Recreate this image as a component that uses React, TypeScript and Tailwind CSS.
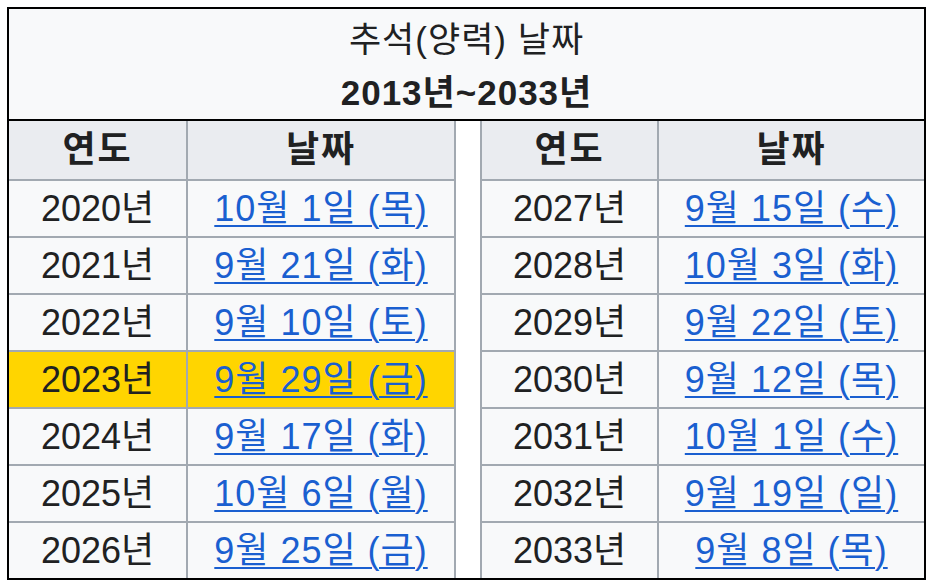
const left = [
  ["2020년", "10월 1일 (목)"],
  ["2021년", "9월 21일 (화)"],
  ["2022년", "9월 10일 (토)"],
  ["2023년", "9월 29일 (금)"],
  ["2024년", "9월 17일 (화)"],
  ["2025년", "10월 6일 (월)"],
  ["2026년", "9월 25일 (금)"],
];

const right = [
  ["2027년", "9월 15일 (수)"],
  ["2028년", "10월 3일 (화)"],
  ["2029년", "9월 22일 (토)"],
  ["2030년", "9월 12일 (목)"],
  ["2031년", "10월 1일 (수)"],
  ["2032년", "9월 19일 (일)"],
  ["2033년", "9월 8일 (목)"],
];

const font = { fontFamily: '"Liberation Sans", "Noto Sans CJK KR", sans-serif' };

function DateTable({
  rows,
  cols,
  highlight,
  className,
}: {
  rows: string[][];
  cols: string;
  highlight?: string;
  className?: string;
}) {
  return (
    <div className={`grid ${cols} gap-[2px] bg-[#a2a9b1] ${className ?? ""}`}>
      <div className="h-[58px] flex items-center justify-center bg-[#eaecf0] font-bold text-[36px] tracking-[2px] text-[#202122]">
        연도
      </div>
      <div className="h-[58px] flex items-center justify-center bg-[#eaecf0] font-bold text-[36px] tracking-[2px] text-[#202122]">
        날짜
      </div>
      {rows.map(([year, date]) => {
        const hl = year === highlight;
        const bg = hl ? "bg-[#ffd500]" : "bg-[#f8f9fa]";
        return (
          <div key={year} className="contents">
            <div className={`h-[55px] flex items-center justify-center text-[36px] text-[#202122] ${bg}`}>
              {year}
            </div>
            <div className={`h-[55px] flex items-center justify-center text-[36px] tracking-[1px] ${bg}`}>
              <a href="#" className="text-[#1a5fd0] underline underline-offset-[4px] decoration-[2px]">
                {date}
              </a>
            </div>
          </div>
        );
      })}
    </div>
  );
}

export default function App() {
  return (
    <div className="w-[936px] h-[588px] bg-white pt-[7px] pl-[7px]" style={font}>
      <div className="w-[919px] border-2 border-black bg-white">
        {/* caption */}
        <div className="h-[112px] pt-[4px] bg-[#f8f9fa] border-b-2 border-black flex flex-col items-center justify-center text-[#202122] text-[35px] leading-[53px] tracking-[1px]">
          <div>추석(양력) 날짜</div>
          <div className="font-bold">2013년~2033년</div>
        </div>

        <div className="flex gap-[24px]">
          <DateTable
            rows={left}
            cols="grid-cols-[177px_266px]"
            highlight="2023년"
            className="border-r-2 border-[#a2a9b1]"
          />
          <DateTable
            rows={right}
            cols="grid-cols-[175px_265px]"
            className="border-l-2 border-[#a2a9b1]"
          />
        </div>
      </div>
    </div>
  );
}
